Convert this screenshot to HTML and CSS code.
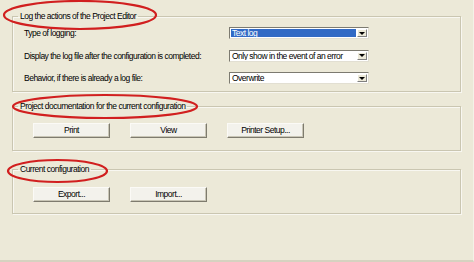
FILE: index.html
```html
<!DOCTYPE html>
<html>
<head>
<meta charset="utf-8">
<link rel="stylesheet" href="styles.css">
</head>
<body>
<div class="page">
  <fieldset class="group group-log">
    <legend>Log the actions of the Project Editor</legend>
    <div class="rows">
      <div class="label">Type of logging:</div>
      <div class="combo"><div class="combo-text selected">Text log</div><div class="combo-btn"><span class="arrow"></span></div></div>
      <div class="label">Display the log file after the configuration is completed:</div>
      <div class="combo"><div class="combo-text">Only show in the event of an error</div><div class="combo-btn"><span class="arrow"></span></div></div>
      <div class="label">Behavior, if there is already a log file:</div>
      <div class="combo"><div class="combo-text">Overwrite</div><div class="combo-btn"><span class="arrow"></span></div></div>
    </div>
  </fieldset>
  <fieldset class="group group-doc">
    <legend>Project documentation for the current configuration</legend>
    <div class="buttons">
      <button class="btn">Print</button>
      <button class="btn">View</button>
      <button class="btn">Printer Setup...</button>
    </div>
  </fieldset>
  <fieldset class="group group-cfg">
    <legend>Current configuration</legend>
    <div class="buttons">
      <button class="btn">Export...</button>
      <button class="btn">Import...</button>
    </div>
  </fieldset>
  <svg class="marks" width="474" height="262" viewBox="0 0 474 262">
    <ellipse cx="80" cy="15" rx="76" ry="14" />
    <ellipse cx="105" cy="106.5" rx="92" ry="11.5" />
    <ellipse cx="57.5" cy="171" rx="49.5" ry="11" />
  </svg>
</div>
</body>
</html>
```
FILE: styles.css
```css
html, body {
  margin: 0;
  padding: 0;
  background: #ece9d8;
}
body {
  font-family: "Liberation Sans", Arial, sans-serif;
  font-size: 8.5px;
  letter-spacing: -0.5px;
  color: #000;
}
.page {
  position: relative;
  width: 474px;
  height: 262px;
  box-sizing: border-box;
  padding: 11px 12px 0 12px;
  border-bottom: 2px solid #d6d2c0;
  border-right: 1px solid #f4f2e8;
  overflow: hidden;
}
.group {
  margin: 0;
  padding: 0;
  border: 1px solid #cac6b1;
  box-shadow: 1px 1px 0 #f8f7f1, inset 1px 1px 0 #f8f7f1;
  min-inline-size: 0;
}
.group legend {
  margin-left: 5px;
  padding: 0 2px;
  line-height: 10px;
  height: 10px;
}
.group-log .rows {
  display: grid;
  grid-template-columns: 205px 140px;
  row-gap: 10.5px;
  padding: 6px 0 7px 11px;
  align-items: center;
}
.label {
  height: 12px;
  line-height: 12px;
  white-space: nowrap;
}
.combo {
  display: flex;
  height: 12px;
  box-sizing: border-box;
  background: #fff;
  border: 1px solid;
  border-color: #7c7a70 #e2dfd2 #e2dfd2 #7c7a70;
  padding: 1px;
  gap: 1px;
}
.combo-text {
  flex: 1;
  line-height: 8px;
  padding-left: 1px;
  white-space: nowrap;
  overflow: hidden;
}
.combo-text.selected {
  background: #316ac5;
  color: #fff;
}
.combo-btn {
  width: 10px;
  box-sizing: border-box;
  background: #ece9d8;
  border: 1px solid;
  border-color: #fff #808080 #808080 #fff;
  display: flex;
  align-items: center;
  justify-content: center;
}
.arrow {
  width: 0;
  height: 0;
  border-left: 3px solid transparent;
  border-right: 3px solid transparent;
  border-top: 3px solid #000;
}
.group-doc {
  margin-top: 9px;
}
.group-cfg {
  margin-top: 13px;
}
.buttons {
  display: flex;
  gap: 20px;
  padding-left: 20px;
}
.group-doc .buttons {
  padding-top: 12px;
  padding-bottom: 12px;
}
.group-cfg .buttons {
  padding-top: 13px;
  padding-bottom: 11px;
}
.btn {
  width: 77px;
  height: 15px;
  margin: 0;
  padding: 0;
  font: inherit;
  letter-spacing: inherit;
  color: #000;
  background: #f3f2ec;
  border: 1px solid;
  border-color: #fbfaf6 #7e7b6e #7e7b6e #fbfaf6;
  box-shadow: inset -1px -1px 0 #c9c6b6;
  line-height: 13px;
}
.marks {
  position: absolute;
  left: 0;
  top: 0;
  pointer-events: none;
}
.marks ellipse {
  fill: none;
  stroke: #d11f1f;
  stroke-width: 2.2;
}
```
